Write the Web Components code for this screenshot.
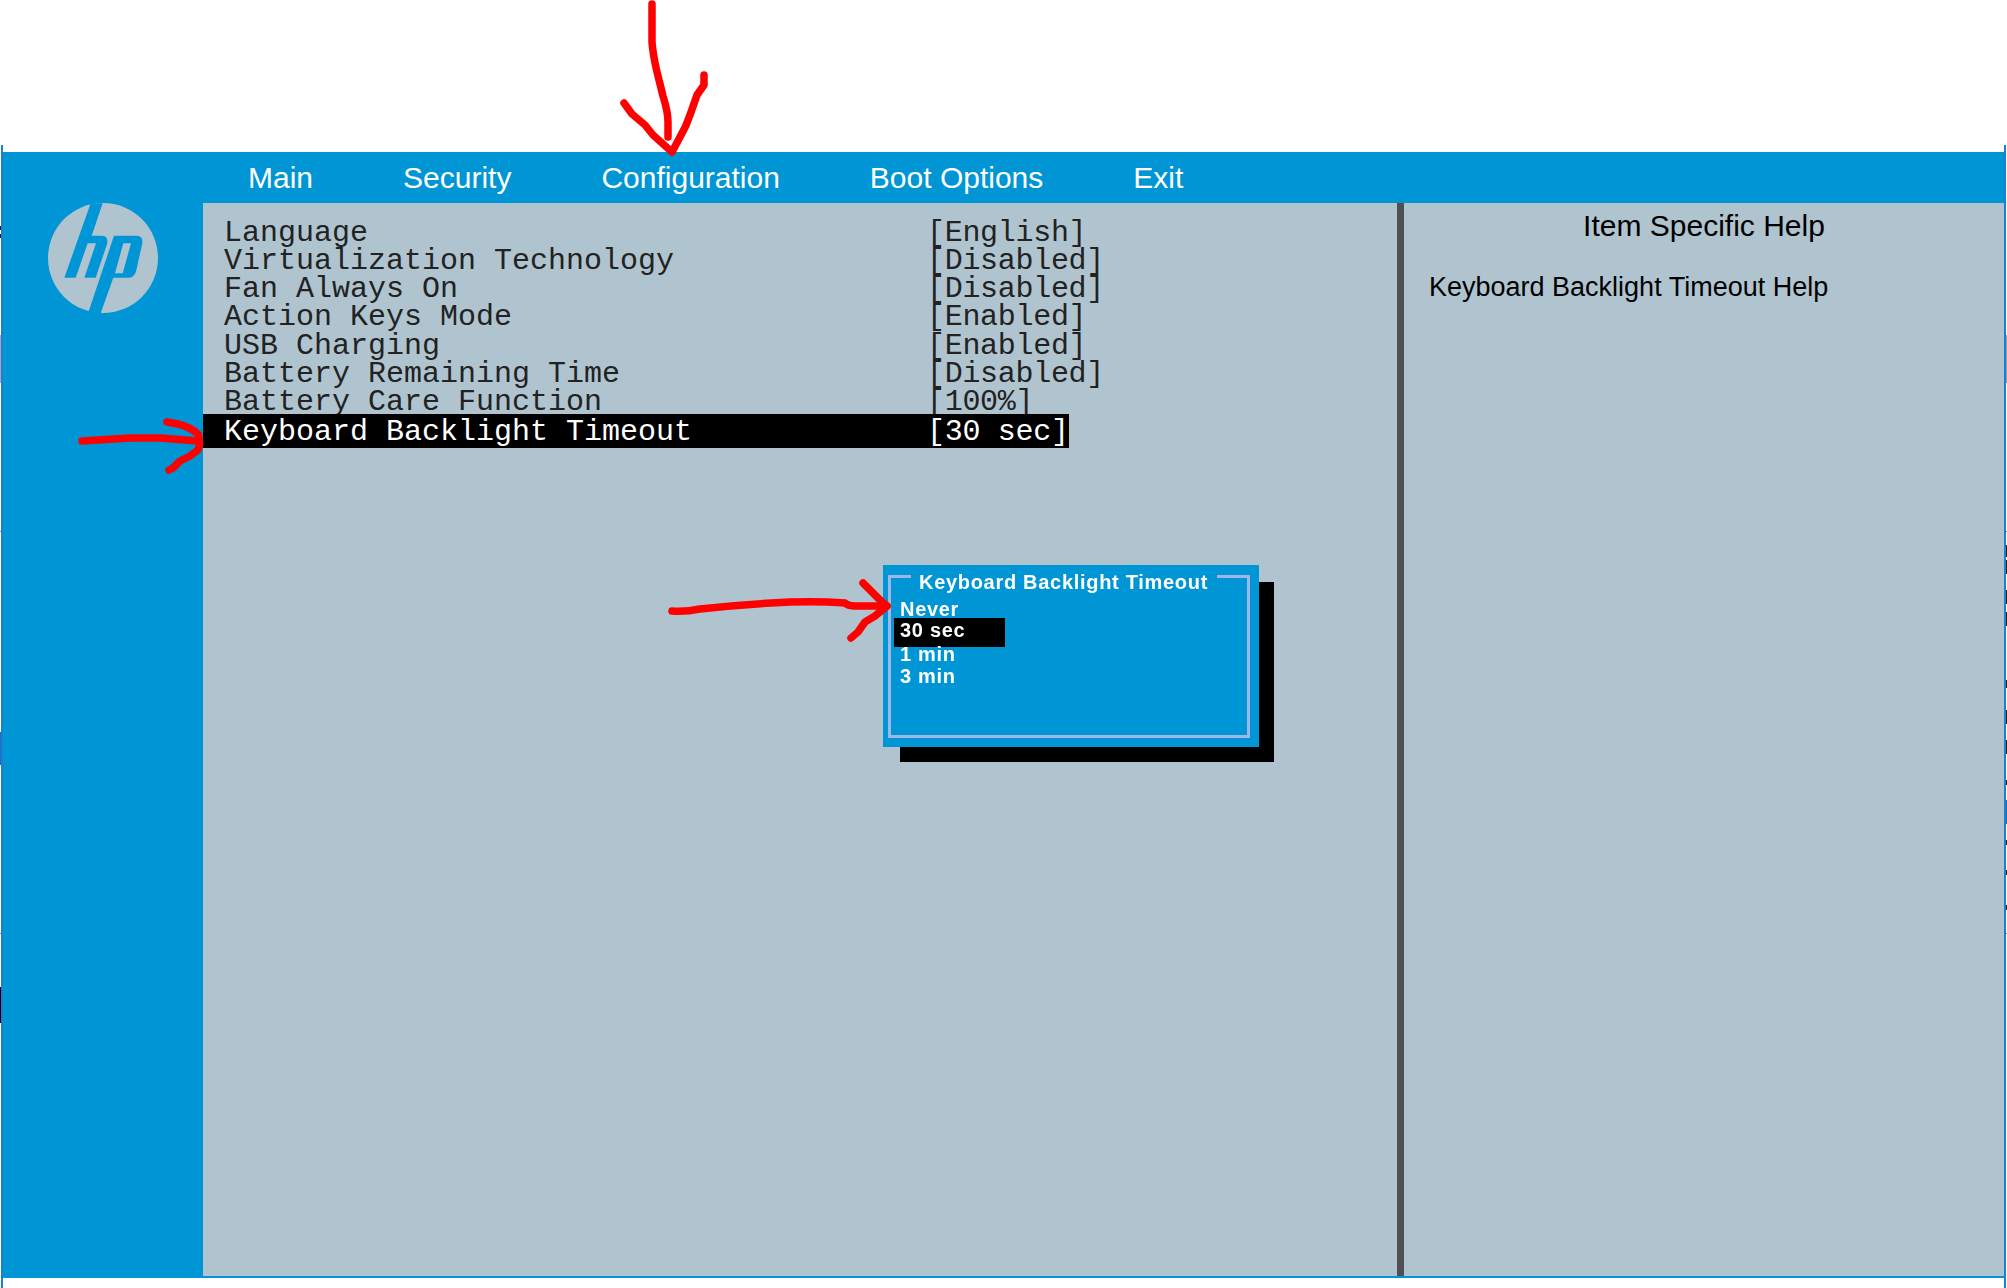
<!DOCTYPE html>
<html>
<head>
<meta charset="utf-8">
<title>BIOS Setup</title>
<style>
  html, body { margin: 0; background: #fff; }
  body { padding-top: 145px; height: 1143px; overflow: hidden; font-family: "Liberation Sans", Arial, sans-serif; }
</style>
</head>
<body>
<bios-screen>
  <hp-logo slot="logo"></hp-logo>
  <bios-menu slot="menu">
    <span>Main</span><span>Security</span><span>Configuration</span><span>Boot Options</span><span>Exit</span>
  </bios-menu>
  <setup-list slot="settings">
    <setup-row label="Language" value="[English]"></setup-row>
    <setup-row label="Virtualization Technology" value="[Disabled]"></setup-row>
    <setup-row label="Fan Always On" value="[Disabled]"></setup-row>
    <setup-row label="Action Keys Mode" value="[Enabled]"></setup-row>
    <setup-row label="USB Charging" value="[Enabled]"></setup-row>
    <setup-row label="Battery Remaining Time" value="[Disabled]"></setup-row>
    <setup-row label="Battery Care Function" value="[100%]"></setup-row>
    <setup-row label="Keyboard Backlight Timeout" value="[30 sec]" selected></setup-row>
  </setup-list>
  <option-popup slot="settings" heading="Keyboard Backlight Timeout">
    <option-line>Never</option-line>
    <option-line selected>30 sec</option-line>
    <option-line>1 min</option-line>
    <option-line>3 min</option-line>
  </option-popup>
  <help-pane slot="help" heading="Item Specific Help">Keyboard Backlight Timeout Help</help-pane>
</bios-screen>
<pen-marks></pen-marks>

<script>
class BiosScreen extends HTMLElement {
  constructor() {
    super();
    this.attachShadow({ mode: 'open' });
    this.shadowRoot.innerHTML = `
      <style>
        :host {
          display: block;
          box-sizing: border-box;
          width: 2005px;
          height: 1143px;
          margin-left: 1px;
          padding-top: 7px;
          border-left: 2px solid #1a80d2;
          border-right: 2px solid #1a80d2;
        }
        .screen {
          display: grid;
          grid-template-columns: 200px 1194px 7px 1fr;
          grid-template-rows: 51px 1fr;
          height: 1126px;
          padding-bottom: 2px;
          box-sizing: border-box;
          background: #0096d6;
        }
        .side { grid-row: 1 / 3; padding: 51px 0 0 45px; }
        .menu { grid-column: 2 / 5; }
        .main { position: relative; background: #b0c4d0; }
        .rule { background: #505054; }
        .help { background: #b0c4d0; }
      </style>
      <div class="screen">
        <div class="side"><slot name="logo"></slot></div>
        <div class="menu"><slot name="menu"></slot></div>
        <div class="main"><slot name="settings"></slot></div>
        <div class="rule"></div>
        <div class="help"><slot name="help"></slot></div>
      </div>
    `;
  }
}

class HpLogo extends HTMLElement {
  constructor() {
    super();
    this.attachShadow({ mode: 'open' });
    this.shadowRoot.innerHTML = `
      <style>
        :host { display: block; width: 110px; height: 110px; }
        svg { display: block; }
      </style>
      <svg width="110" height="110" viewBox="-36 9 330 330">
        <circle cx="129" cy="174" r="165" fill="#b0c4d0"/>
        <path fill="#0096d6" d="M92 10 L13 233 H47 L83 130 H108 L73 233 H107 L141 133 Q147 107 124 107 H95 L128 10 Z"/>
        <path fill="#0096d6" fill-rule="evenodd" d="M162 107 L84 340 H122 L160 233 H205 Q222 233 228 215 L247 130 Q250 107 228 107 Z M190 130 H213 L188 220 H165 Z"/>
      </svg>
    `;
  }
}

class BiosMenu extends HTMLElement {
  constructor() {
    super();
    this.attachShadow({ mode: 'open' });
    this.shadowRoot.innerHTML = `
      <style>
        :host {
          display: flex;
          gap: 90px;
          height: 51px;
          padding-left: 45px;
          color: #fff;
          font: 30px/51px "Liberation Sans", Arial, sans-serif;
        }
      </style>
      <slot></slot>
    `;
  }
}

class SetupList extends HTMLElement {
  constructor() {
    super();
    this.attachShadow({ mode: 'open' });
    this.shadowRoot.innerHTML = `
      <style>
        :host { display: block; padding-top: 15.5px; }
      </style>
      <slot></slot>
    `;
  }
}

class SetupRow extends HTMLElement {
  constructor() {
    super();
    this.attachShadow({ mode: 'open' });
  }

  connectedCallback() {
    this.shadowRoot.innerHTML = `
      <style>
        :host {
          display: grid;
          grid-template-columns: 703px auto;
          height: 28.3px;
          width: max-content;
          padding-left: 21px;
          color: #222;
          font: 30px/28.3px "Liberation Mono", "Courier New", monospace;
          white-space: pre;
        }
        :host([selected]) {
          position: relative;
          height: 34px;
          margin-top: -2.5px;
          line-height: 36px;
          color: #fff;
          background: #000;
        }
        .value { letter-spacing: -0.3px; }
      </style>
      <span>${this.getAttribute('label')}</span>
      <span class="value">${this.getAttribute('value')}</span>
    `;
  }
}

class OptionPopup extends HTMLElement {
  constructor() {
    super();
    this.attachShadow({ mode: 'open' });
  }

  connectedCallback() {
    this.shadowRoot.innerHTML = `
      <style>
        :host {
          position: absolute;
          left: 680px;
          top: 362px;
          width: 376px;
          height: 182px;
          box-sizing: border-box;
          padding: 0 9px 9px 5px;
          background: #0096d6;
          box-shadow: 16px 16px 0 -1px #000;
          color: #fff;
          font: bold 20px/22.7px "Liberation Sans", Arial, sans-serif;
          letter-spacing: 0.7px;
        }
        fieldset {
          height: calc(100% + 3.5px);
          box-sizing: border-box;
          margin: -3.5px 0 0;
          padding: 0 0 0 3px;
          border: 3px solid #9fb6e6;
        }
        legend {
          margin-left: 17px;
          padding: 10px 9px 0 8px;
          line-height: 20px;
        }
        legend span { display: inline-block; filter: blur(0.35px); }
        .lines { padding-top: 6.5px; filter: blur(0.35px); }
      </style>
      <fieldset>
        <legend><span>${this.getAttribute('heading')}</span></legend>
        <div class="lines"><slot></slot></div>
      </fieldset>
    `;
  }
}

class OptionLine extends HTMLElement {
  constructor() {
    super();
    this.attachShadow({ mode: 'open' });
    this.shadowRoot.innerHTML = `
      <style>
        :host { display: block; height: 22.7px; padding-left: 6px; }
        :host([selected]) {
          width: 105px;
          height: 29px;
          margin-top: -2.7px;
          margin-bottom: -4.5px;
          line-height: 24px;
          background: #000;
        }
      </style>
      <slot></slot>
    `;
  }
}

class HelpPane extends HTMLElement {
  constructor() {
    super();
    this.attachShadow({ mode: 'open' });
  }

  connectedCallback() {
    this.shadowRoot.innerHTML = `
      <style>
        :host { display: block; padding: 6px 0 0 25px; color: #000; font-family: "Liberation Sans", Arial, sans-serif; }
        h2 { margin: 0 0 0 -25px; text-align: center; font: 30px/34px "Liberation Sans", Arial, sans-serif; }
        p { margin: 27px 0 0; font-size: 27px; line-height: 34px; }
      </style>
      <h2>${this.getAttribute('heading')}</h2>
      <p><slot></slot></p>
    `;
  }
}

// red pen annotations and the scraps along the screenshot's edges, on top of everything
class PenMarks extends HTMLElement {
  constructor() {
    super();
    this.attachShadow({ mode: 'open' });
    this.shadowRoot.innerHTML = `
      <style>
        :host { position: absolute; left: 0; top: 0; width: 2007px; height: 1288px; pointer-events: none; }
        svg { display: block; }
        .pen { fill: none; stroke: #ff0000; stroke-width: 7.5; stroke-linecap: round; stroke-linejoin: round; }
      </style>
      <svg width="2007" height="1288" viewBox="0 0 2007 1288">
        <g class="pen">
          <path d="M652 4 L652 42 Q653 55 657 72 L663 96 Q668 112 668 122 L668 137"/>
          <path d="M624 103 L632 114 L645 125 L653 135 L672 152 L680 137 Q686 127 690 115 L697 95 L704 85 L704 75"/>
          <path d="M82 441 L130 438 L160 438 L198 441"/>
          <path d="M167 422 L178 424 Q190 427 198 434 Q201 442 198 450 L190 456 L180 461 L173 468 L169 470"/>
          <path d="M672 611 Q685 612 700 609 Q745 604 790 602 Q820 601 845 603 Q848 606 855 606 L887 606"/>
          <path d="M863 583 L870 590 L880 600 L887 606 L875 616 L865 622 L858 632 L851 638"/>
        </g>
        <rect x="0" y="226" width="1" height="4" fill="#222"/>
        <rect x="0" y="234" width="1" height="4" fill="#222"/>
        <rect x="0" y="335" width="1" height="48" fill="#a8a8a8"/>
        <rect x="0" y="531" width="1" height="1" fill="#888"/>
        <rect x="0" y="732" width="1" height="33" fill="#1a6fc0"/>
        <rect x="0" y="933" width="1" height="1" fill="#888"/>
        <rect x="0" y="987" width="1" height="36" fill="#000"/>
        <rect x="2006" y="335" width="1" height="48" fill="#8aa0b8"/>
        <rect x="2006" y="531" width="1" height="1" fill="#888"/>
        <rect x="2006" y="545" width="1" height="12" fill="#222"/>
        <rect x="2006" y="560" width="1" height="14" fill="#222"/>
        <rect x="2006" y="590" width="1" height="14" fill="#222"/>
        <rect x="2006" y="612" width="1" height="14" fill="#222"/>
        <rect x="2006" y="680" width="1" height="8" fill="#222"/>
        <rect x="2006" y="710" width="1" height="14" fill="#222"/>
        <rect x="2006" y="740" width="1" height="14" fill="#222"/>
        <rect x="2006" y="780" width="1" height="5" fill="#222"/>
        <rect x="2006" y="800" width="1" height="24" fill="#1a6fc0"/>
        <rect x="2006" y="840" width="1" height="5" fill="#222"/>
        <rect x="2006" y="870" width="1" height="5" fill="#222"/>
        <rect x="2006" y="905" width="1" height="5" fill="#222"/>
        <rect x="2006" y="933" width="1" height="1" fill="#888"/>
      </svg>
    `;
  }
}

customElements.define('bios-screen', BiosScreen);
customElements.define('hp-logo', HpLogo);
customElements.define('bios-menu', BiosMenu);
customElements.define('setup-list', SetupList);
customElements.define('setup-row', SetupRow);
customElements.define('option-popup', OptionPopup);
customElements.define('option-line', OptionLine);
customElements.define('help-pane', HelpPane);
customElements.define('pen-marks', PenMarks);
</script>
</body>
</html>
